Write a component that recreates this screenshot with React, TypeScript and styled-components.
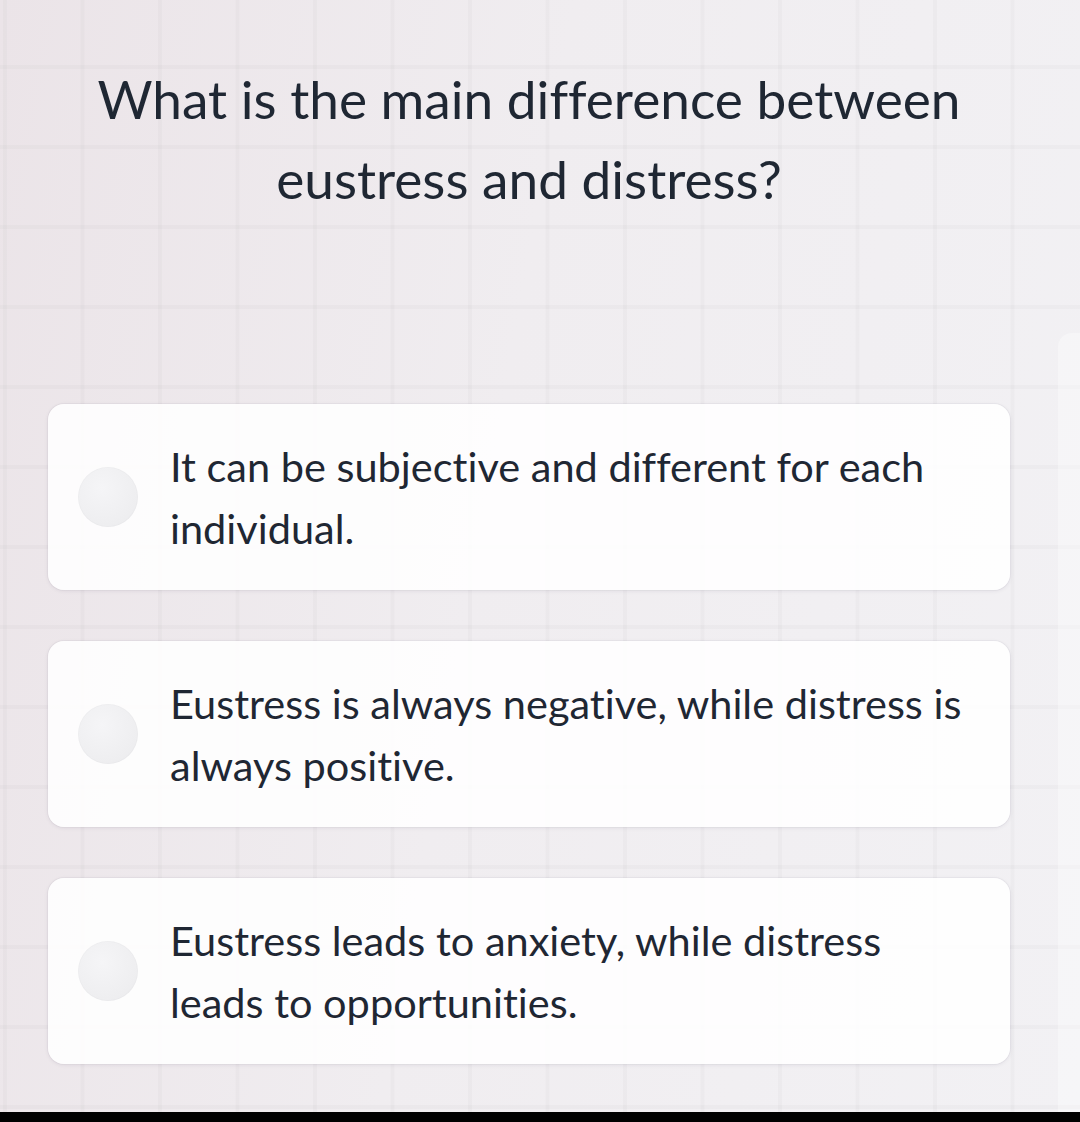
import React from 'react';
import styled, { createGlobalStyle } from 'styled-components';

const INK = '#1f2733';

const GlobalStyle = createGlobalStyle`
  html, body {
    margin: 0;
    padding: 0;
  }
  body {
    font-family: Lato, 'Noto Sans', sans-serif;
    font-variant-ligatures: none;
    color: ${INK};
  }
`;

// =============================================================================
// Styled Components
// =============================================================================

const Page = styled.div`
  display: flex;
  flex-direction: column;
  width: 1080px;
  height: 1122px;
  overflow: hidden;
  background-color: #efecef;
  background-image:
    linear-gradient(90deg, rgba(0, 0, 0, 0.02) 0 4px, transparent 4px),
    linear-gradient(180deg, rgba(0, 0, 0, 0.02) 0 4px, transparent 4px),
    linear-gradient(100deg, #ebe4e8 0%, #f0edf0 45%, #f2f1f4 100%);
  background-size: 77.5px 80px, 77.5px 80px, 100% 100%;
  background-position: 3px 65px, 3px 65px, 0 0;
`;

const Screen = styled.div`
  flex: 1;
  display: flex;
`;

const Main = styled.main`
  flex: 1;
  display: flex;
  flex-direction: column;
  padding: 58px 48px 0;
`;

const Rail = styled.div`
  width: 22px;
  padding-top: 333px;
  display: flex;
`;

const RailBar = styled.div`
  flex: 1;
  border-radius: 14px 0 0 0;
  background: rgba(255, 255, 255, 0.35);
`;

const Question = styled.h1`
  margin: 0 0 186px;
  text-align: center;
  font-size: 53.2px;
  font-weight: 400;
  line-height: 80px;
  color: ${INK};
`;

const Options = styled.div`
  display: flex;
  flex-direction: column;
  gap: 51px;
`;

const Option = styled.div`
  display: flex;
  align-items: center;
  gap: 32px;
  height: 186px;
  box-sizing: border-box;
  padding: 0 38px 0 30px;
  border-radius: 16px;
  background: rgba(255, 255, 255, 0.88);
  box-shadow: 0 1px 4px rgba(40, 30, 60, 0.08), 0 0 0 1px rgba(40, 30, 60, 0.03);
`;

const Radio = styled.span`
  flex: none;
  width: 60px;
  height: 60px;
  border-radius: 50%;
  background: radial-gradient(circle at 40% 35%, #f5f5f7 0%, #eeeef0 70%, #e9e9ec 100%);
  box-shadow: inset 0 0 0 1px rgba(0, 0, 0, 0.015);
`;

const Label = styled.p`
  margin: 0;
  font-size: 41.5px;
  line-height: 62px;
  color: ${INK};
`;

const NavBar = styled.div`
  height: 10px;
  background: #000;
`;

// =============================================================================
// Main Component
// =============================================================================

const answers = [
    'It can be subjective and different for each individual.',
    'Eustress is always negative, while distress is always positive.',
    'Eustress leads to anxiety, while distress leads to opportunities.',
];

const App = () => {
    return (
        <Page>
            <GlobalStyle />
            <Screen>
                <Main>
                    <Question>
                        What is the main difference between
                        <br />
                        eustress and distress?
                    </Question>
                    <Options>
                        {answers.map((answer, i) => (
                            <Option key={`answer-${i}`}>
                                <Radio />
                                <Label>{answer}</Label>
                            </Option>
                        ))}
                    </Options>
                </Main>
                <Rail>
                    <RailBar />
                </Rail>
            </Screen>
            <NavBar />
        </Page>
    );
};

export default App;
